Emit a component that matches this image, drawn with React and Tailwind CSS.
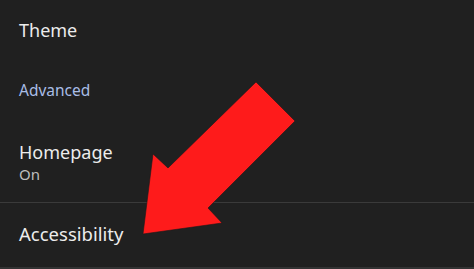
import React from 'react';

const font = { fontFamily: '"Noto Sans", "Open Sans", sans-serif' };

function Row({ className = '', children }) {
  return <div className={`flex flex-col justify-center px-[19px] ${className}`}>{children}</div>;
}

export default function App() {
  return (
    <div className="relative h-[269px] w-[474px] overflow-hidden bg-[#202020]" style={font}>
      <div className="flex flex-col">
        <Row className="h-[60px]">
          <span className="text-[18px] leading-none text-[#ececec]">Theme</span>
        </Row>
        <Row className="h-[62px]">
          <span className="text-[15.5px] leading-none text-[#a9bde6]">Advanced</span>
        </Row>
        <Row className="h-[81px] gap-[6px] border-b border-[#3a3a3a]">
          <span className="text-[18px] leading-none text-[#ececec]">Homepage</span>
          <span className="text-[15px] leading-none text-[#bdbdbd]">On</span>
        </Row>
        <Row className="h-[64px] pb-[2px]">
          <span className="text-[18.5px] leading-none text-[#ececec]">Accessibility</span>
        </Row>
        <div className="h-[2px] bg-[#333333]" />
      </div>

      <svg className="pointer-events-none absolute left-0 top-0" width="474" height="269" viewBox="0 0 474 269">
        <polygon
          points="256,82 295,121 208,208 222,223 143,234 153,154 168,168"
          fill="#fe1b1b"
          stroke="#1a1a1a"
          strokeWidth="0.6"
          strokeLinejoin="miter"
        />
      </svg>
    </div>
  );
}
